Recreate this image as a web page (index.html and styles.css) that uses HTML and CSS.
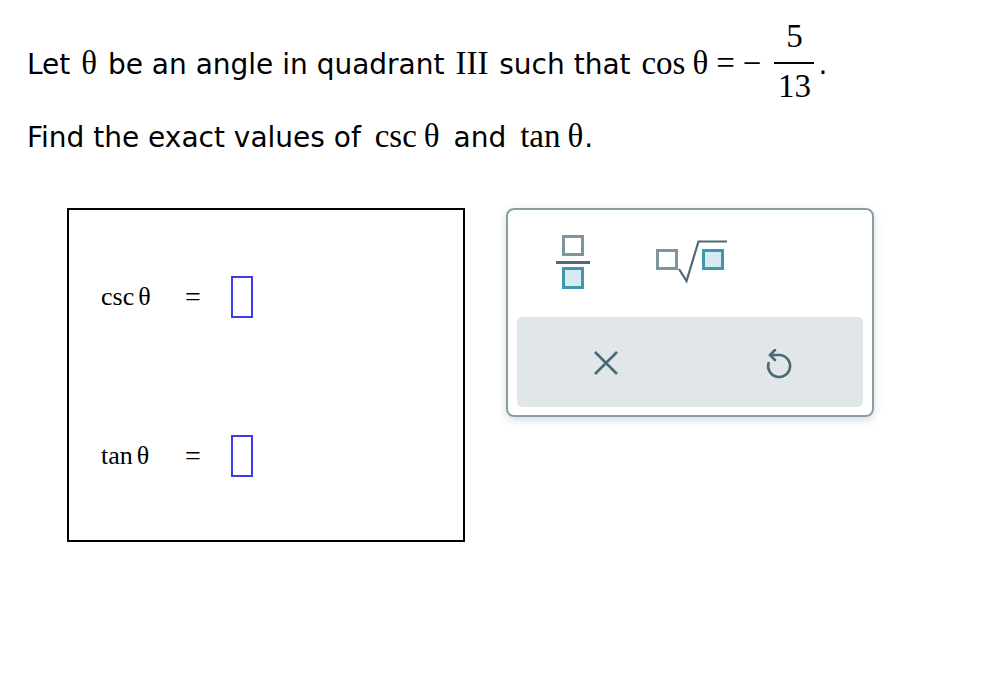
FILE: index.html
```html
<!DOCTYPE html>
<html>
<head>
<meta charset="utf-8">
<link rel="stylesheet" href="styles.css">
</head>
<body>
<div class="page">
  <p class="line line1">Let <span class="m">θ</span> be an angle in quadrant <span class="m">III</span> such that <span class="m">cos<span class="th">θ</span><span class="op eqs">=</span><span class="op minus">−</span></span><span class="frac"><span class="num">5</span><span class="den">13</span></span><span class="dot">.</span></p>
  <p class="line line2">Find the exact values of <span class="m">csc<span class="th">θ</span></span> and <span class="m m-last">tan<span class="th">θ</span></span>.</p>

  <div class="work">
    <div class="answers">
      <div class="row row-csc">
        <span class="lhs">csc<span class="th">θ</span></span>
        <span class="eq">=</span>
        <span class="slot"></span>
      </div>
      <div class="row row-tan">
        <span class="lhs">tan<span class="th">θ</span></span>
        <span class="eq">=</span>
        <span class="slot"></span>
      </div>
    </div>

    <div class="keypad">
      <div class="keys">
        <div class="key key-frac">
          <svg width="36" height="56" viewBox="0 0 36 56">
            <rect x="7.5" y="1.5" width="19" height="18" fill="#fff" stroke="#7f959d" stroke-width="3"/>
            <rect x="0" y="26" width="34" height="3" fill="#4f6a77"/>
            <rect x="7.5" y="33.5" width="19" height="19" fill="#d5ebf1" stroke="#3f97ae" stroke-width="3"/>
          </svg>
        </div>
        <div class="key key-sqrt">
          <svg width="72" height="44" viewBox="0 0 72 44">
            <rect x="1.5" y="10.5" width="19" height="18" fill="#fff" stroke="#7f959d" stroke-width="3"/>
            <path d="M23 29 L30.5 41 L42.5 1.5 L71 1.5" fill="none" stroke="#4f6a77" stroke-width="2.2"/>
            <rect x="47.5" y="10.5" width="19" height="18" fill="#d5ebf1" stroke="#3f97ae" stroke-width="3"/>
          </svg>
        </div>
      </div>
      <div class="actions">
        <div class="act act-x">
          <svg width="26" height="28" viewBox="0 0 26 28">
            <path d="M2 3 L24 25 M24 3 L2 25" stroke="#4a6975" stroke-width="2.6" fill="none"/>
          </svg>
        </div>
        <div class="act act-undo">
          <svg width="30" height="32" viewBox="0 0 30 32">
            <path d="M7 6 L16 6 A11 11 0 1 1 5.5 14" fill="none" stroke="#4a6975" stroke-width="2.6" stroke-linecap="round"/>
            <path d="M12 1 L7 6 L12 11" fill="none" stroke="#4a6975" stroke-width="2.6" stroke-linecap="round" stroke-linejoin="round"/>
          </svg>
        </div>
      </div>
    </div>
  </div>
</div>
</body>
</html>
```

FILE: styles.css
```css
html, body {
  margin: 0;
  padding: 0;
  background: #fff;
}

.page {
  padding: 21px 0 0 27px;
  font-family: "DejaVu Sans", Verdana, sans-serif;
  font-size: 28px;
  color: #000;
}

.line {
  margin: 0;
  white-space: nowrap;
  line-height: 36px;
}

.m {
  font-family: "Liberation Serif", "Times New Roman", serif;
  font-size: 33px;
  margin: 0 2px;
}

.line2 .m {
  margin: 0 5px;
}

.line2 .m-last {
  margin-right: 1px;
}

.th {
  margin-left: 7px;
}

.op {
  margin-left: 2px;
}

.eqs {
  margin-left: 8px;
  margin-right: 2px;
}

.minus {
  margin-left: 6px;
}

.frac {
  display: inline-flex;
  flex-direction: column;
  align-items: center;
  vertical-align: 27px;
  font-family: "Liberation Serif", "Times New Roman", serif;
  font-size: 33px;
  margin-left: 11px;
}

.num {
  width: 40px;
  text-align: center;
  line-height: 30px;
  padding-bottom: 11px;
  border-bottom: 2px solid #000;
}

.den {
  line-height: 30px;
  padding-top: 7px;
}

.dot {
  margin-left: 4px;
}

.line2 {
  margin-top: 17px;
}

.work {
  display: flex;
  align-items: flex-start;
  margin-top: 52px;
  margin-left: 40px;
}

.answers {
  width: 394px;
  height: 330px;
  border: 2px solid #000;
  display: flex;
  flex-direction: column;
}

.row {
  display: flex;
  align-items: center;
  padding-left: 32px;
  height: 42px;
}

.row-csc {
  margin-top: 66px;
}

.row-tan {
  margin-top: 117px;
}

.lhs {
  font-family: "Liberation Serif", "Times New Roman", serif;
  font-size: 26px;
  width: 84px;
}

.lhs .th {
  margin-left: 4px;
}

.eq {
  font-family: "Liberation Serif", "Times New Roman", serif;
  font-size: 28px;
  width: 46px;
}

.slot {
  width: 18px;
  height: 38px;
  border: 2px solid #3b3bf0;
}

.keypad {
  margin-left: 41px;
  width: 346px;
  height: 197px;
  border: 2px solid #8a9da5;
  border-radius: 8px;
  box-shadow: 0 3px 8px rgba(90, 110, 120, 0.25);
  display: flex;
  flex-direction: column;
  padding: 0 9px 8px;
}

.keys {
  display: flex;
  height: 107px;
  align-items: flex-start;
}

.key {
  display: flex;
}

.key-frac {
  padding-top: 25px;
  margin-left: 39px;
}

.key-sqrt {
  padding-top: 30px;
  margin-left: 64px;
}

.actions {
  flex: 1;
  display: flex;
  background: #e1e6e9;
  border-radius: 5px;
}

.act {
  flex: 1;
  display: flex;
  align-items: center;
  justify-content: center;
}

.act-x svg {
  margin-top: 2px;
  margin-left: 4px;
}

.act-undo svg {
  margin-top: 6px;
  margin-left: 2px;
}
```
